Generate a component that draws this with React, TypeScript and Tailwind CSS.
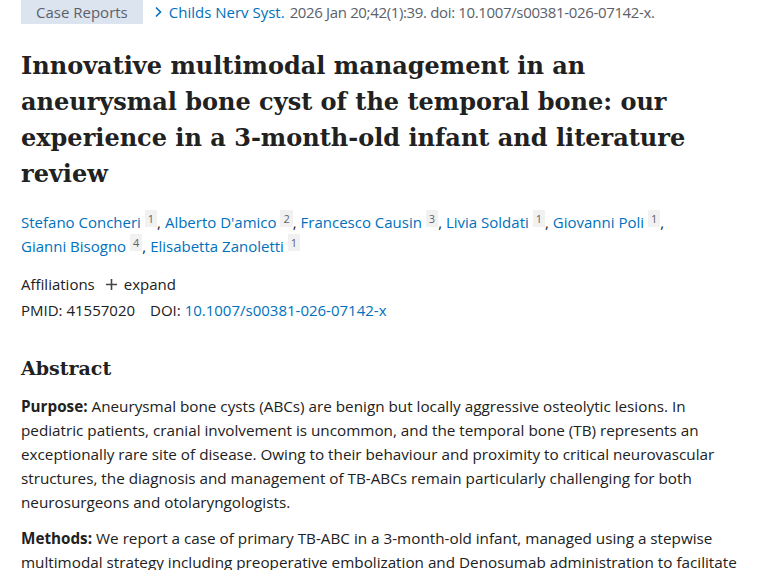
import React from 'react';

const sans = { fontFamily: '"Open Sans", "Noto Sans", sans-serif' };
const serif = { fontFamily: '"DejaVu Serif", "Liberation Serif", serif' };

const authors = [
  { name: 'Stefano Concheri', aff: '1' },
  { name: "Alberto D'amico", aff: '2' },
  { name: 'Francesco Causin', aff: '3' },
  { name: 'Livia Soldati', aff: '1' },
  { name: 'Giovanni Poli', aff: '1' },
  { name: 'Gianni Bisogno', aff: '4' },
  { name: 'Elisabetta Zanoletti', aff: '1' },
];

export default function App() {
  return (
    <div className="min-h-screen bg-white text-[#212121]" style={sans}>
      <div className="w-[739px] pl-[21px]">
        {/* Header line */}
        <div className="flex items-center h-6 text-[15px]">
          <span className="bg-[#dce4ef] text-[#5b616b] h-6 px-[15px] flex items-center">Case Reports</span>
          <span className="ml-[10px] flex items-center text-[#0071bc]">
            <svg width="10" height="12" viewBox="0 0 10 12" className="mr-[6px]">
              <path d="M3 1.5 L7.5 6 L3 10.5" fill="none" stroke="currentColor" strokeWidth="1.6" />
            </svg>
            Childs Nerv Syst.
          </span>
          <span className="ml-[5px] text-[#5b616b] tracking-[-0.35px]">2026 Jan 20;42(1):39. doi: 10.1007/s00381-026-07142-x.</span>
        </div>

        {/* Title */}
        <h1 className="mt-[24px] w-[720px] text-[24px] leading-[36px] font-bold text-[#212121]" style={serif}>
          Innovative multimodal management in an aneurysmal bone cyst of the temporal bone: our experience in a 3-month-old infant and literature review
        </h1>

        {/* Authors */}
        <div className="mt-[18px] w-[720px] text-[15px] leading-6 text-[#0071bc]">
          {authors.map((a, i) => (
            <React.Fragment key={a.name}>
              <span className="whitespace-nowrap">
                {a.name}{' '}
                <sup className="text-[11px] text-[#5b616b] bg-[#f1f1f1] px-[3px] py-[1px] -top-[5px] relative align-baseline">{a.aff}</sup>
                <span className="text-[#212121]">{i < authors.length - 1 ? ',' : ''}</span>
              </span>{' '}
            </React.Fragment>
          ))}
        </div>

        {/* Affiliations */}
        <div className="mt-[14px] text-[15px] leading-6 flex items-center">
          <span>Affiliations</span>
          <span className="ml-[10px] flex items-center">
            <svg width="13" height="13" viewBox="0 0 13 13" className="mr-[6px]">
              <path d="M6.5 1 V12 M1 6.5 H12" stroke="#444" strokeWidth="1.6" />
            </svg>
            expand
          </span>
        </div>
        <div className="mt-[2px] text-[15px] leading-6">
          <span>PMID: 41557020</span>
          <span className="ml-[15px]">DOI: </span>
          <span className="text-[#0071bc]">10.1007/s00381-026-07142-x</span>
        </div>

        {/* Abstract */}
        <h2 className="mt-[30px] text-[19px] leading-8 font-bold" style={serif}>Abstract</h2>
        <div className="mt-[10px] text-[15.25px] leading-6 whitespace-nowrap">
          <p>
            <strong>Purpose:</strong> Aneurysmal bone cysts (ABCs) are benign but locally aggressive osteolytic lesions. In<br />
            pediatric patients, cranial involvement is uncommon, and the temporal bone (TB) represents an<br />
            exceptionally rare site of disease. Owing to their behaviour and proximity to critical neurovascular<br />
            structures, the diagnosis and management of TB-ABCs remain particularly challenging for both<br />
            neurosurgeons and otolaryngologists.
          </p>
          <p className="mt-3">
            <strong>Methods:</strong> We report a case of primary TB-ABC in a 3-month-old infant, managed using a stepwise<br />
            multimodal strategy including preoperative embolization and Denosumab administration to facilitate<br />
            surgical resection.
          </p>
        </div>
      </div>
    </div>
  );
}
